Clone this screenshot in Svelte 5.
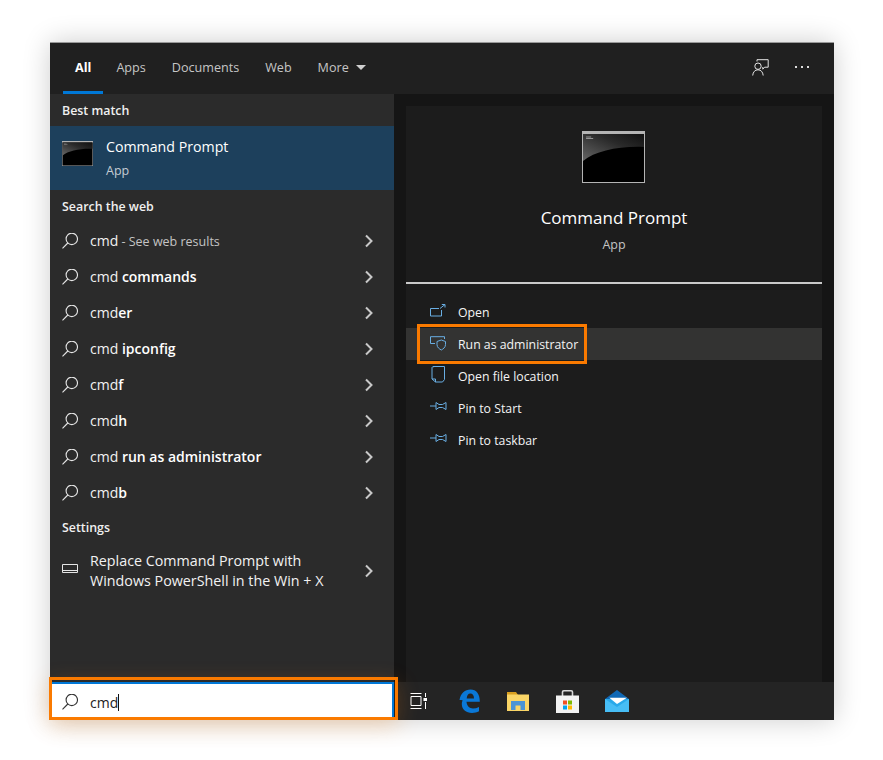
<script>
	const tabs = ['All', 'Apps', 'Documents', 'Web', 'More'];
	const results = [
		{ plain: 'cmd', note: ' - See web results' },
		{ plain: 'cmd ', bold: 'commands' },
		{ plain: 'cmd', bold: 'er' },
		{ plain: 'cmd ', bold: 'ipconfig' },
		{ plain: 'cmd', bold: 'f' },
		{ plain: 'cmd', bold: 'h' },
		{ plain: 'cmd ', bold: 'run as administrator' },
		{ plain: 'cmd', bold: 'b' }
	];
	const actions = [
		{ label: 'Open', icon: 'open' },
		{ label: 'Run as administrator', icon: 'shield', active: true },
		{ label: 'Open file location', icon: 'file' },
		{ label: 'Pin to Start', icon: 'pin' },
		{ label: 'Pin to taskbar', icon: 'pin' }
	];
</script>

{#snippet lens()}
	<svg class="lens" viewBox="0 0 16 16" fill="none" stroke="currentColor" stroke-width="1.1">
		<circle cx="9.8" cy="5.9" r="5.7" />
		<path d="M5.8 10 0.5 15.3" />
	</svg>
{/snippet}

{#snippet chevron()}
	<svg class="chevron" viewBox="0 0 10 14" fill="none" stroke="currentColor" stroke-width="2">
		<path d="M2 1.5 7.5 7 2 12.5" />
	</svg>
{/snippet}

{#snippet console(cls)}
	<svg class={cls} viewBox="0 0 62 52" preserveAspectRatio="none">
		<defs>
			<linearGradient id="glass" x1="0" y1="1" x2="1" y2="0">
				<stop offset="0" stop-color="#666" />
				<stop offset="0.6" stop-color="#2a2a2a" />
				<stop offset="1" stop-color="#101010" />
			</linearGradient>
		</defs>
		<rect width="62" height="52" fill="#b4b4b4" />
		<rect x="1" y="3" width="60" height="48" fill="#000" />
		<path d="M1 3H61V16C36 15 13 20 1 30Z" fill="url(#glass)" />
		<path d="M4 6H9M4 7.5H11" stroke="#aaa" stroke-width="0.8" />
	</svg>
{/snippet}

<div class="page">
	<div class="window">
		<header class="tabs">
			<nav>
				{#each tabs as tab, i}
					<span class="tab" class:current={i === 0}>
						{tab}
						{#if tab === 'More'}<i class="caret"></i>{/if}
					</span>
				{/each}
			</nav>
			<div class="tools">
				<svg class="feedback" viewBox="0 0 17 17" fill="none" stroke="#e4e4e4" stroke-width="1">
					<path d="M5 2.5V0.7H16.2V8.2H12.6L10.8 10.2V8" />
					<circle cx="6" cy="7.2" r="3.2" />
					<path d="M0.7 16.5C1 13 3 10.8 6 10.8 9 10.8 10.8 13 11.2 16.5" />
				</svg>
				<span class="dots"><i></i><i></i><i></i></span>
			</div>
		</header>

		<div class="body">
			<aside class="results">
				<h2>Best match</h2>
				<div class="hero">
					{@render console('cmd-small')}
					<div>
						<div class="hero-name">Command Prompt</div>
						<div class="hero-kind">App</div>
					</div>
				</div>

				<h2>Search the web</h2>
				{#each results as r}
					<div class="row">
						{@render lens()}
						<span class="row-text">{r.plain}{#if r.bold}<b>{r.bold}</b>{/if}{#if r.note}<small>{r.note}</small>{/if}</span>
						{@render chevron()}
					</div>
				{/each}

				<h2 class="settings">Settings</h2>
				<div class="row tall">
					<svg class="lens" viewBox="0 0 16 16" fill="none" stroke="currentColor" stroke-width="1">
						<path d="M0.5 1.5H15.5V9.5H0.5ZM0.5 7.5H15.5" />
					</svg>
					<span class="row-text wide">Replace Command Prompt with<br />Windows PowerShell in the Win + X</span>
					{@render chevron()}
				</div>
			</aside>

			<section class="detail">
				<div class="card">
					<div class="summary">
						{@render console('cmd-large')}
						<div class="detail-name">Command Prompt</div>
						<div class="detail-kind">App</div>
					</div>
					<ul class="actions">
						{#each actions as a}
							<li class:active={a.active}>
								<svg viewBox="0 0 18 20" fill="none" stroke="#69aee3" stroke-width="1">
									{#if a.icon === 'open'}
										<path d="M12.5 10V16H1.5V8.5H10M11 8.5 16 4.5M12.8 4.5H16V7.5" />
									{:else if a.icon === 'shield'}
										<path d="M15.5 7V4.7H1.5V11.5H6" />
										<path d="M8 9.5 12.3 8 16.5 9.5V12.5C16.5 15.5 14 17 12.3 18 10.5 17 8 15.5 8 12.5Z" />
									{:else if a.icon === 'file'}
										<path d="M4 2.5H15.5V15.5L13.5 18H6.5L3 15V3.5ZM4 2.5V3.5M3 15H6.5V18" />
									{:else}
										<path d="M1 10H7M7 6.5 10 8.5H13.5L17 6.5V13.5L13.5 11.5H10L7 13.5Z" />
									{/if}
								</svg>
								<span>{a.label}</span>
							</li>
						{/each}
					</ul>
					<div class="callout"></div>
				</div>
			</section>
		</div>

		<footer class="bottom">
			<div class="search">
				<span class="search-icon">{@render lens()}</span>
				<span class="query">cmd</span><i class="cursor"></i>
			</div>
			<div class="taskbar">
				<svg class="ic taskview" viewBox="0 0 17 16" fill="none" stroke="#fff" stroke-width="1">
					<path d="M0.5 0.5H11.5M0.5 15.5H11.5M1 3.5H11V12.5H1ZM15.5 0V4M15.5 9V16" />
					<rect x="13.5" y="5" width="3.5" height="3" fill="#fff" stroke="none" />
				</svg>
				<svg class="ic edge" viewBox="0 0 21 24">
					<path fill="#0a78d7" d="M0.5 11C1.5 4.5 6 0.5 11.5 0.5 17.5 0.5 20.8 5 20.8 12.8H7.5C7.8 17 10.5 19.5 14 19.5 16 19.5 18 19 20 18V22.3C18 23.4 15.5 24 13 24 7 24 2.8 20.5 2.8 15 2.8 13.8 3 12.4 3.6 11.2 2.6 11 1.5 11 0.5 11ZM7.7 9.5H15C15 6.5 13.5 4.6 11.3 4.6 9.3 4.6 8 6.5 7.7 9.5Z" />
				</svg>
				<svg class="ic folder" viewBox="0 0 22 20">
					<path fill="#d99f1f" d="M0 1H9L11 4H22V6H0Z" />
					<rect y="3.5" width="22" height="16.5" fill="#fad566" />
					<path fill="#4a94d6" d="M4 10H18V19H13.5V14.5H8.5V19H4Z" />
				</svg>
				<svg class="ic store" viewBox="0 0 23 23">
					<path d="M6.5 6V2C6.5 1.2 7 0.8 7.8 0.8H15.2C16 0.8 16.5 1.2 16.5 2V6" fill="none" stroke="#d8d8d8" stroke-width="1.6" />
					<rect y="5.5" width="23" height="17.5" fill="#f3f3f3" />
					<rect x="7" y="10.5" width="4" height="4" fill="#f25022" />
					<rect x="12" y="10.5" width="4" height="4" fill="#7fba00" />
					<rect x="7" y="15.5" width="4" height="4" fill="#00a4ef" />
					<rect x="12" y="15.5" width="4" height="4" fill="#ffb900" />
				</svg>
				<svg class="ic mail" viewBox="0 0 24 22">
					<path fill="#29a9ea" d="M0 9H24V22H0Z" />
					<path fill="#47bdf5" d="M0 9 12 17 24 9V22H0Z" />
					<path fill="#0f68b5" d="M0 9 12 0 24 9 22 9H2Z" />
					<path fill="#fff" d="M4.3 7.7H22L12 14Z" />
				</svg>
			</div>
		</footer>
	</div>
</div>

<style>
	:global(body) {
		margin: 0;
		background: #fff;
	}
	.page {
		width: 883px;
		height: 760px;
		padding: 42px 0 0 50px;
		box-sizing: border-box;
		font-family: 'Open Sans', 'Noto Sans', sans-serif;
		color: #fff;
		overflow: hidden;
	}
	.window {
		position: relative;
		width: 784px;
		height: 678px;
		display: flex;
		flex-direction: column;
		box-shadow: 0 0 26px rgba(0, 0, 0, 0.2);
		border-top: 1px solid #999;
		box-sizing: border-box;
	}

	.tabs {
		height: 51px;
		background: #202020;
		display: flex;
		justify-content: space-between;
		padding-left: 13px;
	}
	nav {
		display: flex;
	}
	.tab {
		display: flex;
		align-items: center;
		padding: 2px 13px 1px;
		height: 45px;
		font-size: 12.6px;
		color: #c6c6c6;
		border-bottom: 3px solid transparent;
	}
	.tab.current {
		color: #fff;
		font-weight: 700;
		border-bottom-color: #0078d7;
		padding: 2px 12px 1px;
	}
	.caret {
		margin-left: 7px;
		border: 5px solid transparent;
		border-top: 5px solid #d0d0d0;
		border-bottom: 0;
	}
	.tools {
		display: flex;
		align-items: center;
		gap: 26px;
		padding: 0 25px 3px 0;
	}
	.feedback {
		width: 17px;
		height: 17px;
	}
	.dots {
		display: flex;
		gap: 4px;
	}
	.dots i {
		width: 2px;
		height: 2px;
		background: #ddd;
	}

	.body {
		flex: 1;
		display: flex;
		min-height: 0;
	}
	.results {
		width: 344px;
		background: #2b2b2b;
	}
	h2 {
		margin: 0;
		height: 32px;
		line-height: 34px;
		padding-left: 12px;
		font-size: 12.4px;
		font-weight: 600;
		color: #f0f0f0;
	}
	h2.settings {
		margin-top: 1px;
	}
	.hero {
		height: 64px;
		background: #1d405c;
		display: flex;
		padding: 12px 12px 0;
		box-sizing: border-box;
		gap: 13px;
	}
	.cmd-small {
		width: 31px;
		height: 25px;
		margin-top: 3px;
	}
	.hero-name {
		font-size: 14.2px;
		line-height: 18px;
	}
	.hero-kind {
		font-size: 12.5px;
		line-height: 18px;
		margin-top: 6px;
		color: #c5ccd3;
	}
	.row {
		height: 36px;
		box-sizing: border-box;
		padding: 2px 20px 0 12px;
		display: flex;
		align-items: center;
		gap: 12px;
		color: #f2f2f2;
	}
	.row.tall {
		height: 56px;
		padding-top: 0;
	}
	.lens {
		width: 16px;
		height: 16px;
		flex: none;
		color: #e6e6e6;
	}
	.row-text {
		flex: 1;
		font-size: 14px;
		line-height: 20px;
		white-space: nowrap;
	}
	.row-text.wide {
		font-size: 14.3px;
	}
	.row-text b {
		font-weight: 600;
		color: #fff;
	}
	.row-text small {
		font-size: 12.5px;
		color: #c4c4c4;
	}
	.chevron {
		width: 10px;
		height: 14px;
		color: #c8c8c8;
		flex: none;
	}

	.detail {
		flex: 1;
		background: #151515;
		padding: 12px 12px 0;
		display: flex;
	}
	.card {
		position: relative;
		flex: 1;
		background: #1c1c1c;
	}
	.summary {
		height: 176px;
		display: flex;
		flex-direction: column;
		align-items: center;
		border-bottom: 2px solid #c9c9c9;
	}
	.cmd-large {
		width: 63px;
		height: 52px;
		margin: 25px 2px 0 0;
	}
	.detail-name {
		font-size: 17px;
		line-height: 24px;
		margin-top: 23px;
	}
	.detail-kind {
		font-size: 12.5px;
		line-height: 18px;
		margin-top: 6px;
		color: #c4c4c4;
	}
	.actions {
		list-style: none;
		margin: 12px 0 0;
		padding: 0;
	}
	.actions li {
		height: 32px;
		display: flex;
		align-items: center;
		padding-left: 23px;
		gap: 11px;
		font-size: 12.3px;
		color: #f4f4f4;
	}
	.actions li.active {
		background: #333332;
	}
	.actions svg {
		width: 18px;
		height: 20px;
		margin-top: -4px;
	}
	.callout {
		position: absolute;
		left: 11px;
		top: 218px;
		width: 170px;
		height: 40px;
		border: 3px solid #fa7a00;
		box-sizing: border-box;
	}

	.bottom {
		height: 38px;
		display: flex;
		background: #242424;
	}
	.search {
		position: relative;
		width: 344px;
		background: #fff;
		box-sizing: border-box;
		border-top: 2px solid #0078d7;
		border-right: 2px solid #0078d7;
		display: flex;
		align-items: center;
		padding-left: 12px;
		color: #222;
	}
	.search::after {
		content: '';
		position: absolute;
		left: -1px;
		top: -7px;
		width: 349px;
		height: 43px;
		box-sizing: border-box;
		border: 3px solid #fa7a00;
		box-shadow: 0 6px 22px rgba(245, 124, 0, 0.22);
	}
	.search-icon {
		display: flex;
		margin-right: 12px;
	}
	.search-icon :global(.lens) {
		color: #333;
	}
	.query {
		font-size: 14px;
	}
	.cursor {
		width: 1px;
		height: 17px;
		background: #111;
	}
	.taskbar {
		flex: 1;
		display: flex;
		align-items: center;
		padding-left: 16px;
	}
	.ic {
		flex: none;
	}
	.taskview {
		width: 17px;
		height: 16px;
	}
	.edge {
		width: 21px;
		height: 24px;
		margin-left: 32px;
	}
	.folder {
		width: 22px;
		height: 20px;
		margin-left: 27px;
	}
	.store {
		width: 23px;
		height: 23px;
		margin-left: 27px;
	}
	.mail {
		width: 24px;
		height: 22px;
		margin-left: 26px;
	}
</style>
